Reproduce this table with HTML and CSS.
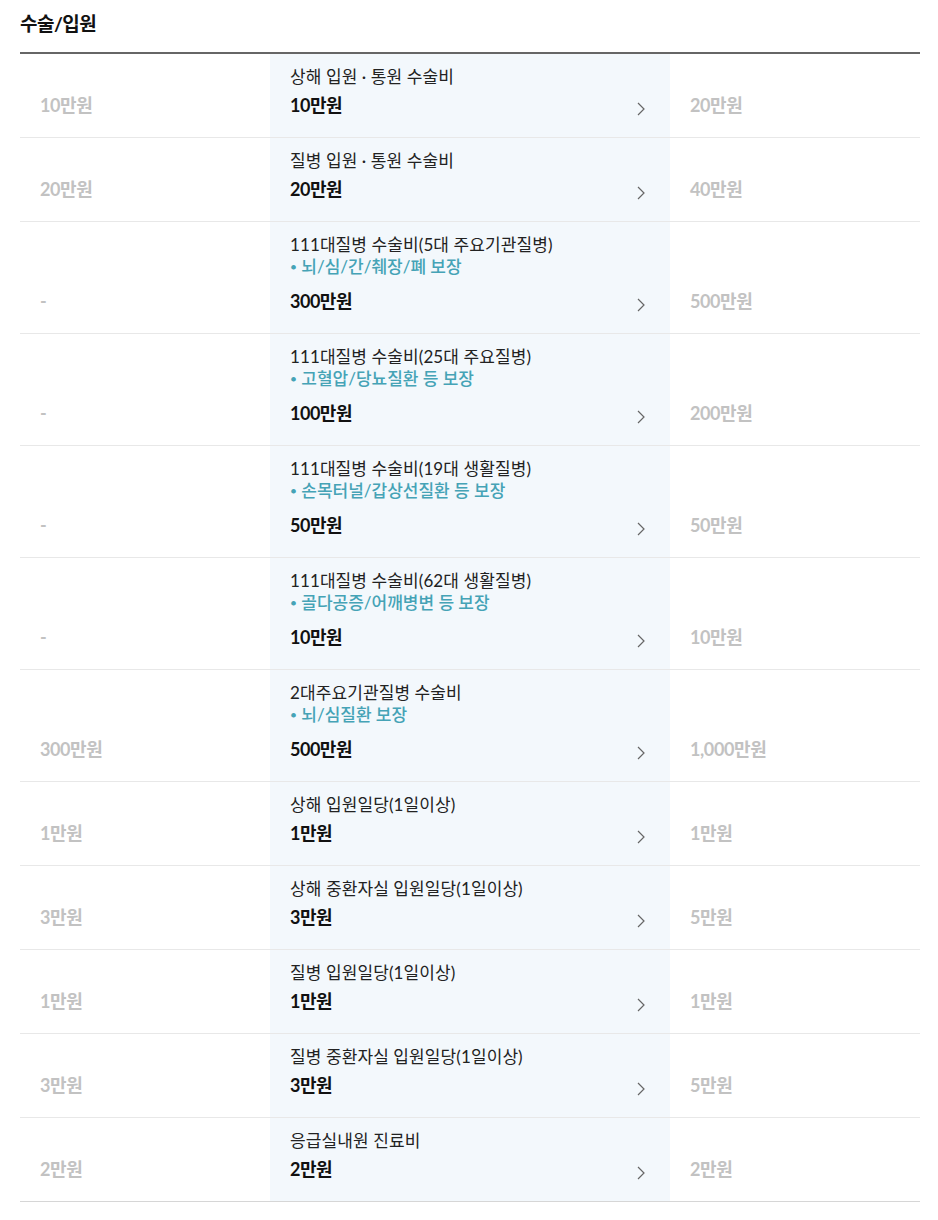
FILE: index.html
```html
<!DOCTYPE html>
<html lang="ko">
<head>
    <meta charset="UTF-8">
    <meta name="viewport" content="width=device-width, initial-scale=1.0">
    <title>수술/입원</title>
    <link rel="stylesheet" href="styles.css">
</head>
<body>
    <div class="container">
        <h2 class="section-title">수술/입원</h2>
        <div class="table">
            <div class="row">
                <div class="cell side">10만원</div>
                <div class="cell main">
                    <div class="main-name">상해 입원 · 통원 수술비</div>
                    <div class="main-amount">10만원</div>
                    <svg class="arrow" width="8" height="14" viewBox="0 0 8 14"><polyline points="1,1 7,7 1,13" fill="none" stroke="#666" stroke-width="1.2"/></svg>
                </div>
                <div class="cell side">20만원</div>
            </div>
            <div class="row">
                <div class="cell side">20만원</div>
                <div class="cell main">
                    <div class="main-name">질병 입원 · 통원 수술비</div>
                    <div class="main-amount">20만원</div>
                    <svg class="arrow" width="8" height="14" viewBox="0 0 8 14"><polyline points="1,1 7,7 1,13" fill="none" stroke="#666" stroke-width="1.2"/></svg>
                </div>
                <div class="cell side">40만원</div>
            </div>
            <div class="row">
                <div class="cell side">-</div>
                <div class="cell main">
                    <div class="main-name">111대질병 수술비(5대 주요기관질병)</div>
                    <div class="main-desc"><span class="dot">•</span> 뇌/심/간/췌장/폐 보장</div>
                    <div class="main-amount">300만원</div>
                    <svg class="arrow" width="8" height="14" viewBox="0 0 8 14"><polyline points="1,1 7,7 1,13" fill="none" stroke="#666" stroke-width="1.2"/></svg>
                </div>
                <div class="cell side">500만원</div>
            </div>
            <div class="row">
                <div class="cell side">-</div>
                <div class="cell main">
                    <div class="main-name">111대질병 수술비(25대 주요질병)</div>
                    <div class="main-desc"><span class="dot">•</span> 고혈압/당뇨질환 등 보장</div>
                    <div class="main-amount">100만원</div>
                    <svg class="arrow" width="8" height="14" viewBox="0 0 8 14"><polyline points="1,1 7,7 1,13" fill="none" stroke="#666" stroke-width="1.2"/></svg>
                </div>
                <div class="cell side">200만원</div>
            </div>
            <div class="row">
                <div class="cell side">-</div>
                <div class="cell main">
                    <div class="main-name">111대질병 수술비(19대 생활질병)</div>
                    <div class="main-desc"><span class="dot">•</span> 손목터널/갑상선질환 등 보장</div>
                    <div class="main-amount">50만원</div>
                    <svg class="arrow" width="8" height="14" viewBox="0 0 8 14"><polyline points="1,1 7,7 1,13" fill="none" stroke="#666" stroke-width="1.2"/></svg>
                </div>
                <div class="cell side">50만원</div>
            </div>
            <div class="row">
                <div class="cell side">-</div>
                <div class="cell main">
                    <div class="main-name">111대질병 수술비(62대 생활질병)</div>
                    <div class="main-desc"><span class="dot">•</span> 골다공증/어깨병변 등 보장</div>
                    <div class="main-amount">10만원</div>
                    <svg class="arrow" width="8" height="14" viewBox="0 0 8 14"><polyline points="1,1 7,7 1,13" fill="none" stroke="#666" stroke-width="1.2"/></svg>
                </div>
                <div class="cell side">10만원</div>
            </div>
            <div class="row">
                <div class="cell side">300만원</div>
                <div class="cell main">
                    <div class="main-name">2대주요기관질병 수술비</div>
                    <div class="main-desc"><span class="dot">•</span> 뇌/심질환 보장</div>
                    <div class="main-amount">500만원</div>
                    <svg class="arrow" width="8" height="14" viewBox="0 0 8 14"><polyline points="1,1 7,7 1,13" fill="none" stroke="#666" stroke-width="1.2"/></svg>
                </div>
                <div class="cell side">1,000만원</div>
            </div>
            <div class="row">
                <div class="cell side">1만원</div>
                <div class="cell main">
                    <div class="main-name">상해 입원일당(1일이상)</div>
                    <div class="main-amount">1만원</div>
                    <svg class="arrow" width="8" height="14" viewBox="0 0 8 14"><polyline points="1,1 7,7 1,13" fill="none" stroke="#666" stroke-width="1.2"/></svg>
                </div>
                <div class="cell side">1만원</div>
            </div>
            <div class="row">
                <div class="cell side">3만원</div>
                <div class="cell main">
                    <div class="main-name">상해 중환자실 입원일당(1일이상)</div>
                    <div class="main-amount">3만원</div>
                    <svg class="arrow" width="8" height="14" viewBox="0 0 8 14"><polyline points="1,1 7,7 1,13" fill="none" stroke="#666" stroke-width="1.2"/></svg>
                </div>
                <div class="cell side">5만원</div>
            </div>
            <div class="row">
                <div class="cell side">1만원</div>
                <div class="cell main">
                    <div class="main-name">질병 입원일당(1일이상)</div>
                    <div class="main-amount">1만원</div>
                    <svg class="arrow" width="8" height="14" viewBox="0 0 8 14"><polyline points="1,1 7,7 1,13" fill="none" stroke="#666" stroke-width="1.2"/></svg>
                </div>
                <div class="cell side">1만원</div>
            </div>
            <div class="row">
                <div class="cell side">3만원</div>
                <div class="cell main">
                    <div class="main-name">질병 중환자실 입원일당(1일이상)</div>
                    <div class="main-amount">3만원</div>
                    <svg class="arrow" width="8" height="14" viewBox="0 0 8 14"><polyline points="1,1 7,7 1,13" fill="none" stroke="#666" stroke-width="1.2"/></svg>
                </div>
                <div class="cell side">5만원</div>
            </div>
            <div class="row">
                <div class="cell side">2만원</div>
                <div class="cell main">
                    <div class="main-name">응급실내원 진료비</div>
                    <div class="main-amount">2만원</div>
                    <svg class="arrow" width="8" height="14" viewBox="0 0 8 14"><polyline points="1,1 7,7 1,13" fill="none" stroke="#666" stroke-width="1.2"/></svg>
                </div>
                <div class="cell side">2만원</div>
            </div>
        </div>
    </div>
</body>
</html>
```

FILE: styles.css
```css
body {
    font-family: Lato, "Noto Sans CJK KR", sans-serif;
    margin: 0;
    padding: 0;
    color: #111;
    background: #fff;
}
.container {
    width: 900px;
    margin: 0 20px;
}
.section-title {
    font-size: 19px;
    font-weight: bold;
    line-height: 28px;
    margin: 0;
    padding: 10px 0 14px;
    letter-spacing: -0.5px;
}
.table {
    border-top: 2px solid #666;
    border-bottom: 1px solid #d6d6d6;
}
.row {
    display: flex;
    border-top: 1px solid #e8e8e8;
}
.row:first-child {
    border-top: none;
}
.cell {
    box-sizing: border-box;
}
.side {
    width: 250px;
    display: flex;
    align-items: flex-end;
    padding: 0 20px 20px;
    font-size: 18px;
    line-height: 24px;
    font-weight: bold;
    color: #c2c2c2;
    letter-spacing: -0.4px;
}
.main {
    width: 400px;
    position: relative;
    background: #f3f8fc;
    padding: 11px 20px 20px;
}
.main-name {
    font-size: 17px;
    line-height: 24px;
    color: #222;
    letter-spacing: 0.1px;
}
.main-desc {
    font-size: 17px;
    line-height: 20px;
    font-weight: 500;
    color: #45a3b6;
    margin-bottom: 12px;
}
.dot {
    font-size: 12px;
    vertical-align: 2px;
}
.main-amount {
    margin-top: 4px;
    font-size: 18px;
    line-height: 24px;
    font-weight: bold;
    color: #111;
    letter-spacing: -0.5px;
}
.arrow {
    position: absolute;
    right: 25px;
    bottom: 21px;
}
```
